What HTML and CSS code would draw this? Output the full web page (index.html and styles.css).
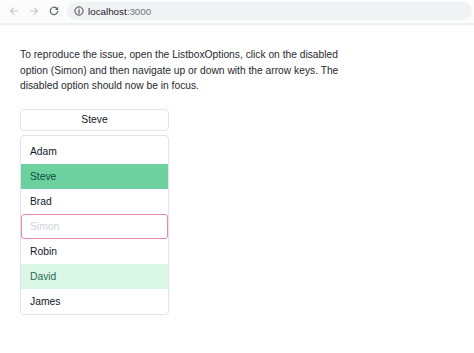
FILE: index.html
```html
<!DOCTYPE html>
<html lang="en">
<head>
<meta charset="utf-8">
<title>Listbox</title>
<link rel="stylesheet" href="styles.css">
</head>
<body>
<header class="chrome">
  <div class="nav">
    <svg class="nav-icon dim" viewBox="0 0 16 16" width="10" height="10"><path d="M14 8H2.5M7.5 3L2.5 8l5 5" fill="none" stroke="currentColor" stroke-width="1.7" stroke-linecap="round" stroke-linejoin="round"/></svg>
    <svg class="nav-icon dim" viewBox="0 0 16 16" width="10" height="10"><path d="M2 8h11.5M8.5 3l5 5-5 5" fill="none" stroke="currentColor" stroke-width="1.7" stroke-linecap="round" stroke-linejoin="round"/></svg>
    <svg class="nav-icon" viewBox="0 0 16 16" width="10" height="10"><path d="M14 8.5a6 6 0 1 1-1.9-5" fill="none" stroke="currentColor" stroke-width="1.9" stroke-linecap="round"/><path d="M14.6 1.2v5.2H9.4z" fill="currentColor"/></svg>
  </div>
  <div class="omnibox">
    <svg class="info" viewBox="0 0 16 16" width="10" height="10"><circle cx="8" cy="8" r="6.6" fill="none" stroke="currentColor" stroke-width="1.6"/><path d="M8 7.2v4.2" stroke="currentColor" stroke-width="1.7" stroke-linecap="round"/><circle cx="8" cy="4.8" r="1" fill="currentColor"/></svg>
    <span class="host">localhost</span><span class="port">:3000</span>
  </div>
</header>
<main class="page">
  <p class="intro">To reproduce the issue, open the ListboxOptions, click on the disabled option (Simon) and then navigate up or down with the arrow keys. The disabled option should now be in focus.</p>
  <div class="listbox">
    <button class="trigger">Steve</button>
    <ul class="options">
      <li class="option">Adam</li>
      <li class="option selected">Steve</li>
      <li class="option">Brad</li>
      <li class="option disabled">Simon</li>
      <li class="option">Robin</li>
      <li class="option active">David</li>
      <li class="option">James</li>
    </ul>
  </div>
</main>
</body>
</html>
```
FILE: styles.css
```css
* { box-sizing: border-box; }
html, body { margin: 0; padding: 0; background: #fff; }
body { font-family: "Liberation Sans", Arial, sans-serif; color: #111827; }

.chrome {
  height: 25px;
  display: flex;
  align-items: center;
  background: #fcfcfd;
  border-bottom: 2px solid #eef0f3;
  padding: 0 0 1px 9px;
}
.nav { display: flex; align-items: center; gap: 10px; width: 58px; }
.nav-icon { color: #5f6368; }
.nav-icon.dim { color: #c4c7cc; }
.omnibox {
  flex: 1;
  height: 18px;
  margin-right: 2px;
  border-radius: 9px;
  background: #f1f2f4;
  display: flex;
  align-items: center;
  padding-left: 7px;
  font-size: 9.8px;
}
.info { color: #3c4043; margin-right: 4px; }
.host { color: #202124; }
.port { color: #70757a; }

.page { padding: 22px 20px 0; }
.intro {
  margin: 0;
  width: 340px;
  font-size: 10.25px;
  line-height: 15.5px;
  color: #262a30;
}
.listbox { width: 149px; margin-top: 15px; }
.trigger {
  display: block;
  width: 100%;
  height: 22px;
  padding: 0;
  background: #fff;
  border: 1px solid #e2e4e8;
  border-radius: 4px;
  font: inherit;
  font-size: 10.3px;
  color: #111827;
}
.options {
  list-style: none;
  margin: 4px 0 0;
  padding: 3px 0 0;
  border: 1px solid #e2e4e8;
  border-radius: 4px;
  box-shadow: 0 1px 2px rgba(0,0,0,0.05);
}
.option {
  height: 25px;
  display: flex;
  align-items: center;
  padding-left: 9px;
  font-size: 10.3px;
  color: #111827;
}
.option.selected { background: #6dd19f; color: #064e3b; }
.option.active { background: #daf7e8; color: #2b6a4b; }
.option.disabled {
  color: #cfd3d8;
  border: 1px solid #e889b0;
  border-radius: 3px;
  padding-left: 8px;
}
```
